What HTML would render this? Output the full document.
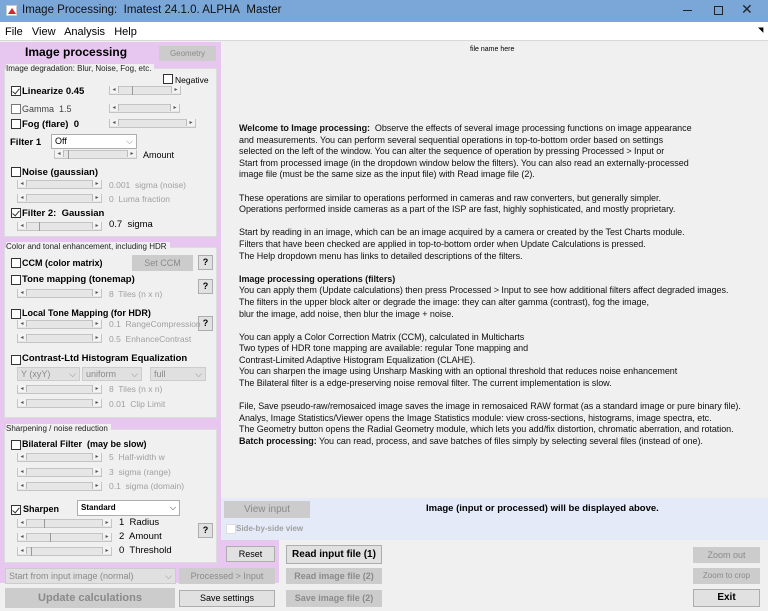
<!DOCTYPE html>
<html><head><meta charset="utf-8">
<style>
*{box-sizing:border-box;margin:0;padding:0}
body{width:768px;height:611px;overflow:hidden;background:#f0f0f0;font-family:"Liberation Sans",Arial,sans-serif;font-size:9px;color:#000;position:relative}
.a{position:absolute;white-space:nowrap}
.cb{position:absolute;width:10px;height:10px;border:1px solid #333;background:#fff}
.cb.dis{border-color:#777}
.ck::after{content:"";position:absolute;left:2px;top:0px;width:3px;height:6px;border:solid #333;border-width:0 1px 1px 0;transform:rotate(40deg)}
.b{font-weight:bold}
.g{color:#a0a0a0;font-size:8.5px}
.sl{position:absolute;height:9px;border:1px solid #c4c4c4;background:#e6e6e6}
.sl::before{content:"◂";position:absolute;left:0;top:-1px;width:8px;height:7px;border-right:1px solid #bbb;font-size:6px;line-height:8px;text-align:center;color:#555;background:#f3f3f3}
.sl::after{content:"▸";position:absolute;right:0;top:-1px;width:8px;height:7px;border-left:1px solid #bbb;font-size:6px;line-height:8px;text-align:center;color:#555;background:#f3f3f3}
.th{position:absolute;top:-1px;height:9px;border-left:1px solid #999;}
.btn{position:absolute;border:1px solid #adadad;background:#e1e1e1;text-align:center;font-size:9px}
.btn.d{background:#cccccc;border-color:#cccccc;color:#8a8a8a}
.dd{position:absolute;border:1px solid #adadad;background:#fff;padding-left:3px;font-size:9px}
.dd::after{content:"⌵";position:absolute;right:3px;top:0;color:#888}
.dd.d{background:#e0e0e0;border-color:#ccc;color:#8a8a8a}
.grp{position:absolute;border:1px solid #dcdcdc;background:#f0f0f0}
.gl{position:absolute;font-size:8px;background:#f0f0f0;padding-right:3px;color:#222}
.q{position:absolute;width:15px;height:15px;border:1px solid #adadad;background:#e1e1e1;font-weight:bold;text-align:center;line-height:13px;font-size:9px}
#txt{position:absolute;left:239px;top:123px;line-height:11.6px;font-size:9px;color:#111;letter-spacing:-0.05px}
</style></head><body>
<div class="a" style="left:0;top:0;width:768px;height:22px;background:#7aa7d8"></div>
<div class="a" style="left:6px;top:5px;width:11px;height:11px;background:#fff;border:1px solid #ccc"><div style="position:absolute;left:1px;top:2px;width:0;height:0;border-left:4px solid transparent;border-right:4px solid transparent;border-bottom:6px solid #d23"></div></div>
<div class="a" style="left:22px;top:4px;font-size:11.5px;color:#111">Image Processing:&nbsp; Imatest 24.1.0. ALPHA&nbsp; Master</div>
<div class="a" style="left:683px;top:10px;width:9px;height:1px;background:#222"></div>
<div class="a" style="left:714px;top:6px;width:9px;height:9px;border:1px solid #222"></div>
<div class="a" style="left:741px;top:1px;font-size:14px;color:#222">✕</div>
<div class="a" style="left:0;top:22px;width:768px;height:19px;background:#fff;border-bottom:1px solid #d8d8d8"></div>
<div class="a" style="left:5px;top:26px;font-size:11px">File&nbsp;&nbsp; View&nbsp;&nbsp; Analysis&nbsp;&nbsp; Help</div>
<div class="a" style="left:758px;top:26px;font-size:7px">◥</div>
<div class="a" style="left:0;top:42px;width:221px;height:541px;background:#e7c6f0"></div>
<div class="a" style="left:220px;top:539px;width:59px;height:44px;background:#e7c6f0"></div>
<div class="a" style="left:25px;top:45px;font-size:12px;font-weight:bold">Image processing</div>
<div class="btn d" style="left:159px;top:46px;width:57px;height:15px;line-height:13px;font-size:8px">Geometry</div>

<div class="grp" style="left:4px;top:68px;width:213px;height:169px"></div>
<div class="gl" style="left:6px;top:64px">Image degradation: Blur, Noise, Fog, etc.</div>
<div class="cb" style="left:163px;top:74px"></div><div class="a" style="left:175px;top:75px;font-size:8.5px">Negative</div>
<div class="cb ck" style="left:11px;top:86px"></div><div class="a b" style="left:22px;top:86px;font-size:9.5px">Linearize 0.45</div>
<div class="sl" style="left:109px;top:86px;width:72px"><div class="th" style="left:22px"></div></div>
<div class="cb dis" style="left:11px;top:104px"></div><div class="a" style="left:22px;top:104px;color:#444">Gamma&nbsp; 1.5</div>
<div class="sl" style="left:109px;top:104px;width:71px"></div>
<div class="cb" style="left:11px;top:119px"></div><div class="a b" style="left:22px;top:119px;font-size:9.5px">Fog (flare)&nbsp; 0</div>
<div class="sl" style="left:109px;top:119px;width:87px"></div>
<div class="a b" style="left:10px;top:137px;font-size:9.5px">Filter 1</div>
<div class="dd" style="left:51px;top:134px;width:86px;height:15px;line-height:13px">Off</div>
<div class="sl" style="left:54px;top:150px;width:83px"><div class="th" style="left:13px"></div></div>
<div class="a" style="left:143px;top:150px">Amount</div>
<div class="cb" style="left:11px;top:167px"></div><div class="a b" style="left:22px;top:167px;font-size:9.5px">Noise (gaussian)</div>
<div class="sl" style="left:17px;top:180px;width:85px"></div><div class="a g" style="left:109px;top:180px">0.001&nbsp; sigma (noise)</div>
<div class="sl" style="left:17px;top:194px;width:85px"></div><div class="a g" style="left:109px;top:194px">0&nbsp; Luma fraction</div>
<div class="cb ck" style="left:11px;top:208px"></div><div class="a b" style="left:22px;top:208px;font-size:9.5px">Filter 2:&nbsp; Gaussian</div>
<div class="sl" style="left:17px;top:222px;width:85px"><div class="th" style="left:21px"></div></div><div class="a" style="left:109px;top:219px;font-size:9.5px">0.7&nbsp; sigma</div>

<div class="grp" style="left:4px;top:247px;width:213px;height:171px"></div>
<div class="gl" style="left:6px;top:242px">Color and tonal enhancement, including HDR</div>
<div class="cb" style="left:11px;top:258px"></div><div class="a b" style="left:22px;top:258px">CCM (color matrix)</div>
<div class="btn d" style="left:132px;top:255px;width:61px;height:16px;line-height:14px">Set CCM</div>
<div class="q" style="left:198px;top:255px">?</div>
<div class="cb" style="left:11px;top:275px"></div><div class="a b" style="left:22px;top:274px;font-size:9.5px">Tone mapping (tonemap)</div>
<div class="q" style="left:198px;top:279px">?</div>
<div class="sl" style="left:17px;top:289px;width:85px"></div><div class="a g" style="left:109px;top:289px">8&nbsp; Tiles (n x n)</div>
<div class="cb" style="left:11px;top:309px"></div><div class="a b" style="left:22px;top:308px">Local Tone Mapping (for HDR)</div>
<div class="q" style="left:198px;top:316px">?</div>
<div class="sl" style="left:17px;top:320px;width:85px"></div><div class="a g" style="left:109px;top:319px">0.1&nbsp; RangeCompression</div>
<div class="sl" style="left:17px;top:334px;width:85px"></div><div class="a g" style="left:109px;top:334px">0.5&nbsp; EnhanceContrast</div>
<div class="cb" style="left:11px;top:355px"></div><div class="a b" style="left:22px;top:353px;font-size:9.5px">Contrast-Ltd Histogram Equalization</div>
<div class="dd d" style="left:17px;top:367px;width:63px;height:14px;line-height:12px">Y (xyY)</div>
<div class="dd d" style="left:82px;top:367px;width:60px;height:14px;line-height:12px">uniform</div>
<div class="dd d" style="left:150px;top:367px;width:56px;height:14px;line-height:12px">full</div>
<div class="sl" style="left:17px;top:385px;width:85px"></div><div class="a g" style="left:109px;top:384px">8&nbsp; Tiles (n x n)</div>
<div class="sl" style="left:17px;top:399px;width:85px"></div><div class="a g" style="left:109px;top:399px">0.01&nbsp; Clip Limit</div>

<div class="grp" style="left:4px;top:429px;width:213px;height:134px"></div>
<div class="gl" style="left:6px;top:424px">Sharpening / noise reduction</div>
<div class="cb" style="left:11px;top:440px"></div><div class="a b" style="left:22px;top:439px">Bilateral Filter&nbsp; (may be slow)</div>
<div class="sl" style="left:17px;top:453px;width:85px"></div><div class="a g" style="left:109px;top:452px">5&nbsp; Half-width w</div>
<div class="sl" style="left:17px;top:468px;width:85px"></div><div class="a g" style="left:109px;top:467px">3&nbsp; sigma (range)</div>
<div class="sl" style="left:17px;top:482px;width:85px"></div><div class="a g" style="left:109px;top:481px">0.1&nbsp; sigma (domain)</div>
<div class="cb ck" style="left:11px;top:505px"></div><div class="a b" style="left:23px;top:504px">Sharpen</div>
<div class="dd" style="left:77px;top:500px;width:103px;height:16px;line-height:14px;font-weight:bold;font-size:8px">Standard</div>
<div class="sl" style="left:17px;top:519px;width:95px"><div class="th" style="left:26px"></div></div><div class="a" style="left:119px;top:517px;font-size:9.5px">1&nbsp; Radius</div>
<div class="sl" style="left:17px;top:533px;width:95px"><div class="th" style="left:32px"></div></div><div class="a" style="left:119px;top:531px;font-size:9.5px">2&nbsp; Amount</div>
<div class="sl" style="left:17px;top:547px;width:95px"><div class="th" style="left:13px"></div></div><div class="a" style="left:119px;top:545px;font-size:9.5px">0&nbsp; Threshold</div>
<div class="q" style="left:198px;top:523px">?</div>

<div class="btn" style="left:226px;top:546px;width:49px;height:16px;line-height:14px">Reset</div>
<div class="dd d" style="left:5px;top:568px;width:171px;height:16px;line-height:14px">Start from input image (normal)</div>
<div class="btn d" style="left:179px;top:568px;width:96px;height:16px;line-height:14px">Processed &gt; Input</div>
<div class="btn d" style="left:5px;top:588px;width:170px;height:20px;line-height:18px;font-size:11px;font-weight:bold">Update calculations</div>
<div class="btn" style="left:179px;top:590px;width:96px;height:17px;line-height:15px">Save settings</div>

<div class="a" style="left:470px;top:46px;font-size:7px">file name here</div>
<div id="txt"><b>Welcome to Image processing:</b>&nbsp; Observe the effects of several image processing functions on image appearance<br>and measurements. You can perform several sequential operations in top-to-bottom order based on settings<br>selected on the left of the window. You can alter the sequence of operation by pressing Processed &gt; Input or<br>Start from processed image (in the dropdown window below the filters). You can also read an externally-processed<br>image file (must be the same size as the input file) with Read image file (2).<br><br>These operations are similar to operations performed in cameras and raw converters, but generally simpler.<br>Operations performed inside cameras as a part of the ISP are fast, highly sophisticated, and mostly proprietary.<br><br>Start by reading in an image, which can be an image acquired by a camera or created by the Test Charts module.<br>Filters that have been checked are applied in top-to-bottom order when Update Calculations is pressed.<br>The Help dropdown menu has links to detailed descriptions of the filters.<br><br><b>Image processing operations (filters)</b><br>You can apply them (Update calculations) then press Processed &gt; Input to see how additional filters affect degraded images.<br>The filters in the upper block alter or degrade the image: they can alter gamma (contrast), fog the image,<br>blur the image, add noise, then blur the image + noise.<br><br>You can apply a Color Correction Matrix (CCM), calculated in Multicharts<br>Two types of HDR tone mapping are available: regular Tone mapping and<br>Contrast-Limited Adaptive Histogram Equalization (CLAHE).<br>You can sharpen the image using Unsharp Masking with an optional threshold that reduces noise enhancement<br>The Bilateral filter is a edge-preserving noise removal filter. The current implementation is slow.<br><br>File, Save pseudo-raw/remosaiced image saves the image in remosaiced RAW format (as a standard image or pure binary file).<br>Analys, Image Statistics/Viewer opens the Image Statistics module: view cross-sections, histograms, image spectra, etc.<br>The Geometry button opens the Radial Geometry module, which lets you add/fix distortion, chromatic aberration, and rotation.<br><b>Batch processing:</b> You can read, process, and save batches of files simply by selecting several files (instead of one).</div>

<div class="a" style="left:221px;top:498px;width:547px;height:42px;background:#e4eaf7"></div>
<div class="btn d" style="left:224px;top:501px;width:86px;height:17px;line-height:15px;font-size:10px">View input</div>
<div class="cb" style="left:226px;top:524px;border-color:#ddd"></div><div class="a b" style="left:236px;top:524px;font-size:8px;color:#a0a0a0">Side-by-side view</div>
<div class="a b" style="left:426px;top:503px;font-size:9.5px">Image (input or processed) will be displayed above.</div>

<div class="btn" style="left:286px;top:545px;width:96px;height:19px;line-height:17px;font-weight:bold;font-size:10px">Read input file (1)</div>
<div class="btn d" style="left:286px;top:568px;width:96px;height:16px;line-height:14px;font-weight:bold">Read image file (2)</div>
<div class="btn d" style="left:286px;top:590px;width:96px;height:17px;line-height:15px;font-weight:bold">Save image file (2)</div>

<div class="btn d" style="left:693px;top:547px;width:67px;height:16px;line-height:14px">Zoom out</div>
<div class="btn d" style="left:693px;top:568px;width:67px;height:16px;line-height:14px;font-size:8px">Zoom to crop</div>
<div class="btn" style="left:693px;top:589px;width:67px;height:18px;line-height:16px;font-weight:bold;font-size:10px">Exit</div>
</body></html>
